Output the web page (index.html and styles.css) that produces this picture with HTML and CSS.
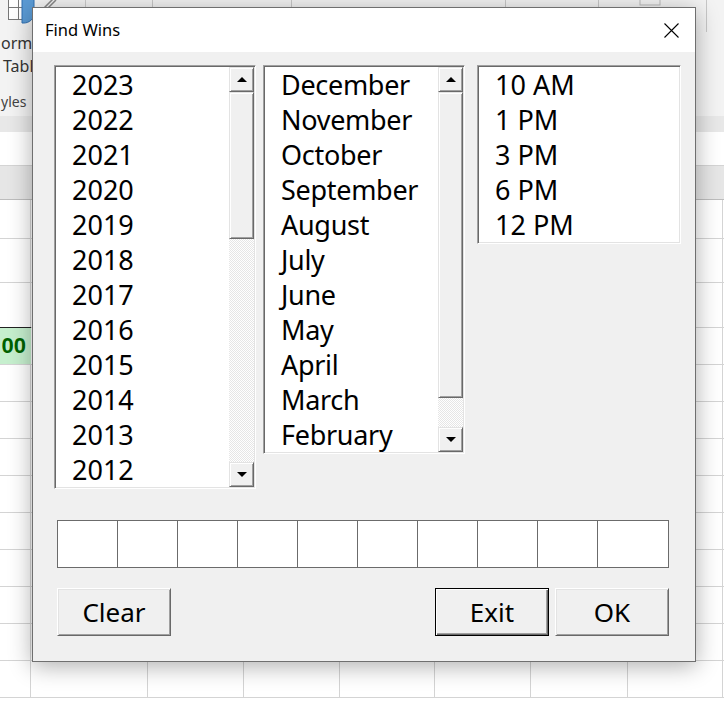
FILE: index.html
```html
<!DOCTYPE html>
<html lang="en">
<head>
<meta charset="UTF-8">
<meta name="viewport" content="width=device-width, initial-scale=1.0">
<title>Find Wins</title>
<link rel="stylesheet" href="styles.css">
</head>
<body>
<div class="sheet">
  <div class="ribbon">
    <svg class="ribbon-icons" width="724" height="32" viewBox="0 0 724 32">
      <rect x="8.5" y="-4.5" width="20" height="24" fill="#fff" stroke="#777"/>
      <path d="M8.5 7.5H28.5M18.5 -4V19.5" stroke="#777"/>
      <path d="M22 -2H34V14C34 19 29 23 24 23H22Z" fill="#5b9bd5" stroke="#2f6fb1"/>
      <path d="M44 8L53 -1M47 9L56 0" stroke="#888" stroke-width="1.5"/>
      <path d="M85.5 0V7" stroke="#ccc"/>
      <path d="M152.5 0V7M291.5 0V7M505.5 0V7M598.5 0V7M706.5 0V32" stroke="#c8c8c8"/>
      <rect x="640" y="-4" width="20" height="9" fill="none" stroke="#bbb"/>
    </svg>
    <div class="ribbon-btn">
      <span class="l1">orm</span>
      <span class="l2">Tabl</span>
    </div>
    <div class="group-label">yles</div>
  </div>
  <div class="ribbon-band"></div>
  <div class="formula-bar"></div>
  <div class="col-header"></div>
  <div class="grid">
    <div class="row r1"></div>
    <div class="row r2"></div>
    <div class="row r3"></div>
    <div class="row"><div class="cell good">00</div></div>
    <div class="row"></div>
    <div class="row"></div>
    <div class="row"></div>
    <div class="row"></div>
    <div class="row"></div>
    <div class="row"></div>
    <div class="row"></div>
    <div class="row"></div>
    <div class="row"></div>
  </div>
</div>

<div class="dialog">
  <div class="titlebar">
    <span class="title">Find Wins</span>
    <svg class="close" width="15" height="15" viewBox="0 0 15 15">
      <path d="M0.5 0.5L14.5 14.5M14.5 0.5L0.5 14.5" stroke="#000" stroke-width="1.1"/>
    </svg>
  </div>
  <div class="dialog-body">
    <div class="lists">
      <div class="listbox years">
        <ul class="items">
          <li>2023</li>
          <li>2022</li>
          <li>2021</li>
          <li>2020</li>
          <li>2019</li>
          <li>2018</li>
          <li>2017</li>
          <li>2016</li>
          <li>2015</li>
          <li>2014</li>
          <li>2013</li>
          <li>2012</li>
        </ul>
        <div class="scrollbar">
          <div class="sb-btn"><span class="arrow up"></span></div>
          <div class="sb-thumb"></div>
          <div class="sb-track"></div>
          <div class="sb-btn"><span class="arrow down"></span></div>
        </div>
      </div>

      <div class="listbox months">
        <ul class="items">
          <li>December</li>
          <li>November</li>
          <li>October</li>
          <li>September</li>
          <li>August</li>
          <li>July</li>
          <li>June</li>
          <li>May</li>
          <li>April</li>
          <li>March</li>
          <li>February</li>
        </ul>
        <div class="scrollbar">
          <div class="sb-btn"><span class="arrow up"></span></div>
          <div class="sb-thumb"></div>
          <div class="sb-track"></div>
          <div class="sb-btn"><span class="arrow down"></span></div>
        </div>
      </div>

      <div class="listbox times">
        <ul class="items">
          <li>10 AM</li>
          <li>1 PM</li>
          <li>3 PM</li>
          <li>6 PM</li>
          <li>12 PM</li>
        </ul>
      </div>
    </div>

    <div class="digits">
      <div class="digit"></div>
      <div class="digit"></div>
      <div class="digit"></div>
      <div class="digit"></div>
      <div class="digit"></div>
      <div class="digit"></div>
      <div class="digit"></div>
      <div class="digit"></div>
      <div class="digit"></div>
      <div class="digit last"></div>
    </div>

    <div class="actions">
      <button class="btn">Clear</button>
      <button class="btn default">Exit</button>
      <button class="btn">OK</button>
    </div>
  </div>
</div>
</body>
</html>
```

FILE: styles.css
```css
body {
  margin: 0;
  padding: 0;
  width: 724px;
  height: 713px;
  overflow: hidden;
  position: relative;
  background: #fff;
  font-family: "Noto Sans", Arial, sans-serif;
}

/* excel behind the dialog */
.ribbon {
  height: 116px;
  background: #f3f3f3;
  overflow: hidden;
}

.ribbon-icons {
  display: block;
}

.ribbon-btn {
  font-size: 16px;
  line-height: 23px;
  color: #333;
}

.ribbon-btn span {
  display: block;
  white-space: nowrap;
}

.ribbon-btn .l1 {
  margin-left: 1px;
}

.ribbon-btn .l2 {
  margin-left: 3px;
}

.group-label {
  font-size: 14px;
  line-height: 20px;
  margin-top: 14px;
  margin-left: 1px;
  color: #444;
}

.ribbon-band {
  height: 16px;
  background: #e8e8e8;
}

.formula-bar {
  height: 33px;
  border-bottom: 1px solid #d4d4d4;
}

.col-header {
  height: 33px;
  background: #e6e6e6;
  border-bottom: 1px solid #bdbdbd;
}

.grid {
  background:
    linear-gradient(#d4d4d4, #d4d4d4) 30px 0 / 1px 100% no-repeat,
    linear-gradient(#d4d4d4, #d4d4d4) 147px 0 / 1px 100% no-repeat,
    linear-gradient(#d4d4d4, #d4d4d4) 243px 0 / 1px 100% no-repeat,
    linear-gradient(#d4d4d4, #d4d4d4) 339px 0 / 1px 100% no-repeat,
    linear-gradient(#d4d4d4, #d4d4d4) 434px 0 / 1px 100% no-repeat,
    linear-gradient(#d4d4d4, #d4d4d4) 530px 0 / 1px 100% no-repeat,
    linear-gradient(#d4d4d4, #d4d4d4) 627px 0 / 1px 100% no-repeat,
    linear-gradient(#d4d4d4, #d4d4d4) 722px 0 / 1px 100% no-repeat;
}

.row {
  height: 37px;
  box-sizing: border-box;
  border-bottom: 1px solid #d4d4d4;
}

.row.r1 { height: 39px; }
.row.r2 { height: 44px; }
.row.r3 { height: 45px; }

.cell.good {
  width: 31px;
  height: 36px;
  background: #c6efce;
  color: #006100;
  font-family: "Liberation Sans", Arial, sans-serif;
  font-weight: bold;
  font-size: 22px;
  line-height: 36px;
  text-align: right;
  padding-right: 5px;
  box-sizing: border-box;
  box-shadow: 0 -1px #222;
}

/* dialog */
.dialog {
  position: absolute;
  left: 32px;
  top: 7px;
  width: 664px;
  height: 655px;
  box-sizing: border-box;
  border: 1px solid #6f6f6f;
  background: #f0f0f0;
  box-shadow: 0 4px 22px rgba(0, 0, 0, 0.32);
}

.titlebar {
  height: 44px;
  background: #fff;
  display: flex;
  align-items: center;
  justify-content: space-between;
  padding: 0 16px 0 12px;
}

.title {
  font-size: 16.5px;
  line-height: 44px;
  color: #000;
}

.close {
  display: block;
}

.dialog-body {
  padding: 13px 0 0 21px;
}

.lists {
  display: flex;
  align-items: flex-start;
}

.listbox {
  display: flex;
  box-sizing: border-box;
  width: 202px;
  padding: 1px;
  background: #fff;
  border: 1px solid;
  border-color: #a0a0a0 #fff #fff #a0a0a0;
  box-shadow: inset 1px 1px #696969, inset -1px -1px #e3e3e3;
}

.listbox.years {
  height: 424px;
  margin-right: 7px;
}

.listbox.months {
  height: 389px;
  margin-right: 12px;
}

.listbox.times {
  width: 204px;
  height: 179px;
}

.items {
  flex: 1;
  margin: 0;
  padding: 0 0 0 16px;
  list-style: none;
  overflow: hidden;
  font-size: 27px;
  line-height: 35px;
  color: #000;
  white-space: nowrap;
}

.months .items {
  letter-spacing: -0.3px;
}

.scrollbar {
  width: 25px;
  display: flex;
  flex-direction: column;
}

.sb-btn,
.sb-thumb {
  box-sizing: border-box;
  background: #f0f0f0;
  border: 1px solid;
  border-color: #e3e3e3 #696969 #696969 #e3e3e3;
  box-shadow: inset 1px 1px #fff, inset -1px -1px #a0a0a0;
}

.sb-btn {
  height: 25px;
  display: flex;
  align-items: center;
  justify-content: center;
}

.years .sb-thumb { height: 147px; }
.months .sb-thumb { height: 306px; }

.sb-track {
  flex: 1;
  background: repeating-conic-gradient(#fff 0 25%, #e6e6e6 0 50%) 0 0 / 2px 2px;
}

.arrow {
  width: 0;
  height: 0;
  border-left: 5px solid transparent;
  border-right: 5px solid transparent;
}

.arrow.up {
  border-bottom: 5px solid #000;
}

.arrow.down {
  border-top: 5px solid #000;
}

.digits {
  display: flex;
  margin: 31px 0 0 3px;
}

.digit {
  width: 61px;
  height: 48px;
  box-sizing: border-box;
  background: #fff;
  border: 1px solid #6b6b6b;
  margin-left: -1px;
}

.digit:first-child {
  margin-left: 0;
}

.digit.last {
  width: 72px;
}

.actions {
  display: flex;
  width: 612px;
  margin: 20px 0 0 3px;
}

.btn {
  width: 114px;
  height: 48px;
  padding: 0;
  box-sizing: border-box;
  font-family: "Noto Sans", Arial, sans-serif;
  font-size: 26px;
  color: #000;
  background: #f0f0f0;
  border: 1px solid;
  border-color: #fff #696969 #696969 #fff;
  box-shadow: inset 1px 1px #e3e3e3, inset -1px -1px #a0a0a0;
  border-radius: 0;
}

.btn.default {
  margin-left: auto;
  margin-right: 6px;
  border-color: #000;
  box-shadow: inset 1px 1px #fff, inset -1px -1px #696969, inset -2px -2px #a0a0a0;
}
```
